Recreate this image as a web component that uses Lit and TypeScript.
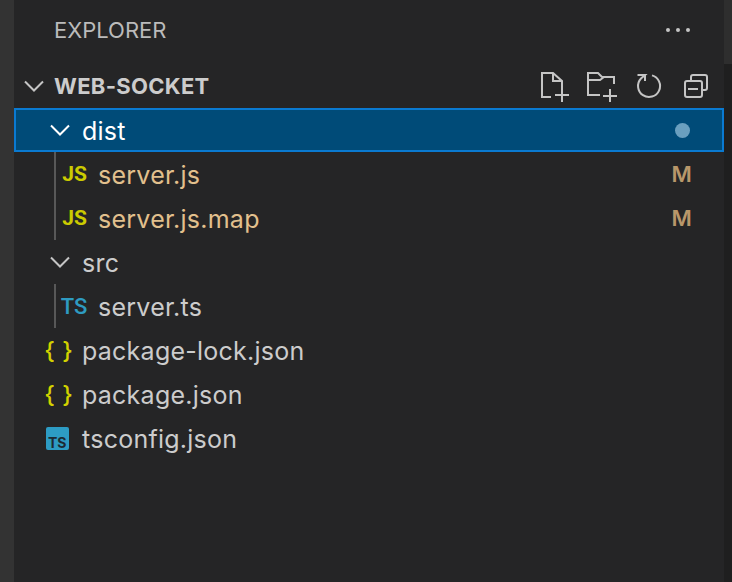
import { LitElement, css, html, svg } from 'lit';
import { customElement } from 'lit/decorators.js';

type IconKind = 'js' | 'ts' | 'json' | 'tsconfig';

interface TreeFile {
  name: string;
  icon: IconKind;
  modified?: boolean;
}

const ACTIONS = [
  // new file
  svg`<path d="M12 27H3V3H14L23 11V18M14 3V11H23M16 25H30M23 18V32" />`,
  // new folder
  svg`<path d="M14 25H2V3H12L16 7H28V14M2 10H14L18 7M17 26H31M24 19V32" />`,
  // refresh
  svg`<path d="M19 5.4A11 11 0 1 1 8 8.5L12 5H4.5M12 5V11" />`,
  // collapse all
  svg`<path d="M7 11H20A2 2 0 0 1 22 13V25A2 2 0 0 1 20 27H7A2 2 0 0 1 5 25V13A2 2 0 0 1 7 11ZM11 10V7A2 2 0 0 1 13 5H25A2 2 0 0 1 27 7V18A2 2 0 0 1 25 20H23M8 19H18" />`,
];

const chevron = html`
  <svg class="chevron" viewBox="0 0 32 32"><path d="M7 11.5L16 20.5L25 11.5" /></svg>
`;

@customElement('app-root')
export class AppRoot extends LitElement {
  static styles = css`
    :host {
      display: flex;
      height: 582px;
      background: #252526;
      color: #cccccc;
      font-family: Inter, 'Liberation Sans', sans-serif;
      font-size: 25px;
      letter-spacing: 0.25px;
      overflow: hidden;
    }

    .activity {
      width: 14px;
      flex: none;
      background: #333333;
    }

    .sidebar {
      flex: 1;
      min-width: 0;
    }

    .scrollbar {
      width: 8px;
      flex: none;
      background: #1f1f1f;
    }

    .thumb {
      height: 64px;
      background: #2e2e2e;
    }

    .title {
      height: 64px;
      display: flex;
      align-items: center;
      justify-content: space-between;
      padding: 0 34px 4px 40px;
      box-sizing: border-box;
      font-size: 22px;
      letter-spacing: 0;
      color: #bbbbbb;
    }

    .dots {
      display: flex;
      gap: 6px;
    }

    .dots i {
      width: 4px;
      height: 4px;
      border-radius: 50%;
      background: #c5c5c5;
    }

    .row {
      height: 44px;
      display: flex;
      align-items: center;
      box-sizing: border-box;
      white-space: nowrap;
    }

    .label {
      padding-top: 2px;
    }

    .head {
      font-size: 22px;
      font-weight: 700;
      letter-spacing: 0.3px;
      padding-left: 4px;
    }

    .head .label {
      margin-left: 4px;
      padding-top: 0;
    }

    .actions {
      margin-left: auto;
      display: flex;
      gap: 15px;
      padding-right: 12px;
    }

    .actions svg {
      width: 32px;
      height: 32px;
      fill: none;
      stroke: #c5c5c5;
      stroke-width: 2;
    }

    .chevron {
      width: 32px;
      height: 32px;
      flex: none;
      fill: none;
      stroke: #c5c5c5;
      stroke-width: 2;
    }

    .folder {
      padding-left: 30px;
    }

    .folder .label {
      margin-left: 6px;
    }

    .selected {
      background: #004b78;
      color: #ffffff;
      outline: 2px solid #0a7ad1;
      outline-offset: -2px;
    }

    .selected .chevron {
      stroke: #ffffff;
    }

    .dot {
      margin-left: auto;
      margin-right: 34px;
      width: 15px;
      height: 15px;
      border-radius: 50%;
      background: #6a9fbf;
    }

    .group {
      margin-left: 40px;
      border-left: 2px solid #585858;
    }

    .file {
      padding-left: 27px;
    }

    .group .file {
      padding-left: 2px;
    }

    .file .label {
      margin-left: 9px;
    }

    .group .file .label {
      margin-left: 8px;
    }

    .modified {
      color: #e2c08d;
    }

    .badge {
      margin-left: auto;
      margin-right: 32px;
      font-size: 22px;
      font-weight: 600;
      color: #b8976a;
    }

    .icon {
      width: 32px;
      flex: none;
      display: flex;
      justify-content: center;
      font-weight: 700;
      letter-spacing: 0;
    }

    .js {
      color: #cbcb00;
      font-family: Roboto, sans-serif;
      font-size: 21px;
      font-weight: 700;
      padding-left: 1px;
      box-sizing: border-box;
    }

    .ts {
      color: #2e9bc1;
      font-family: Roboto, sans-serif;
      font-size: 22px;
      font-weight: 500;
    }

    .json {
      color: #d2d200;
      font-size: 24px;
      font-weight: 500;
      word-spacing: 1px;
      padding-left: 3px;
      box-sizing: border-box;
    }

    .tsconfig span {
      width: 23px;
      height: 23px;
      box-sizing: border-box;
      border-radius: 2px;
      background: #2d9cc4;
      color: #1d2a33;
      font-size: 14px;
      line-height: 15px;
      padding: 8px 2px 0 0;
      text-align: right;
    }
  `;

  private renderIcon(kind: IconKind) {
    if (kind === 'js') return html`<div class="icon js">JS</div>`;
    if (kind === 'ts') return html`<div class="icon ts">TS</div>`;
    if (kind === 'json') return html`<div class="icon json">{ }</div>`;
    return html`<div class="icon tsconfig"><span>TS</span></div>`;
  }

  private renderFile(file: TreeFile) {
    return html`
      <div class="row file ${file.modified ? 'modified' : ''}">
        ${this.renderIcon(file.icon)}
        <span class="label">${file.name}</span>
        ${file.modified ? html`<span class="badge">M</span>` : null}
      </div>
    `;
  }

  render() {
    const dist: TreeFile[] = [
      { name: 'server.js', icon: 'js', modified: true },
      { name: 'server.js.map', icon: 'js', modified: true },
    ];
    const src: TreeFile[] = [{ name: 'server.ts', icon: 'ts' }];
    const root: TreeFile[] = [
      { name: 'package-lock.json', icon: 'json' },
      { name: 'package.json', icon: 'json' },
      { name: 'tsconfig.json', icon: 'tsconfig' },
    ];

    return html`
      <div class="activity"></div>
      <div class="sidebar">
        <div class="title">
          <span>EXPLORER</span>
          <div class="dots"><i></i><i></i><i></i></div>
        </div>
        <div class="row head">
          ${chevron}
          <span class="label">WEB-SOCKET</span>
          <div class="actions">
            ${ACTIONS.map((icon) => html`<svg viewBox="0 0 32 32">${icon}</svg>`)}
          </div>
        </div>
        <div class="row folder selected">
          ${chevron}
          <span class="label">dist</span>
          <div class="dot"></div>
        </div>
        <div class="group">${dist.map((file) => this.renderFile(file))}</div>
        <div class="row folder">
          ${chevron}
          <span class="label">src</span>
        </div>
        <div class="group">${src.map((file) => this.renderFile(file))}</div>
        ${root.map((file) => this.renderFile(file))}
      </div>
      <div class="scrollbar"><div class="thumb"></div></div>
    `;
  }
}

declare global {
  interface HTMLElementTagNameMap {
    'app-root': AppRoot;
  }
}
